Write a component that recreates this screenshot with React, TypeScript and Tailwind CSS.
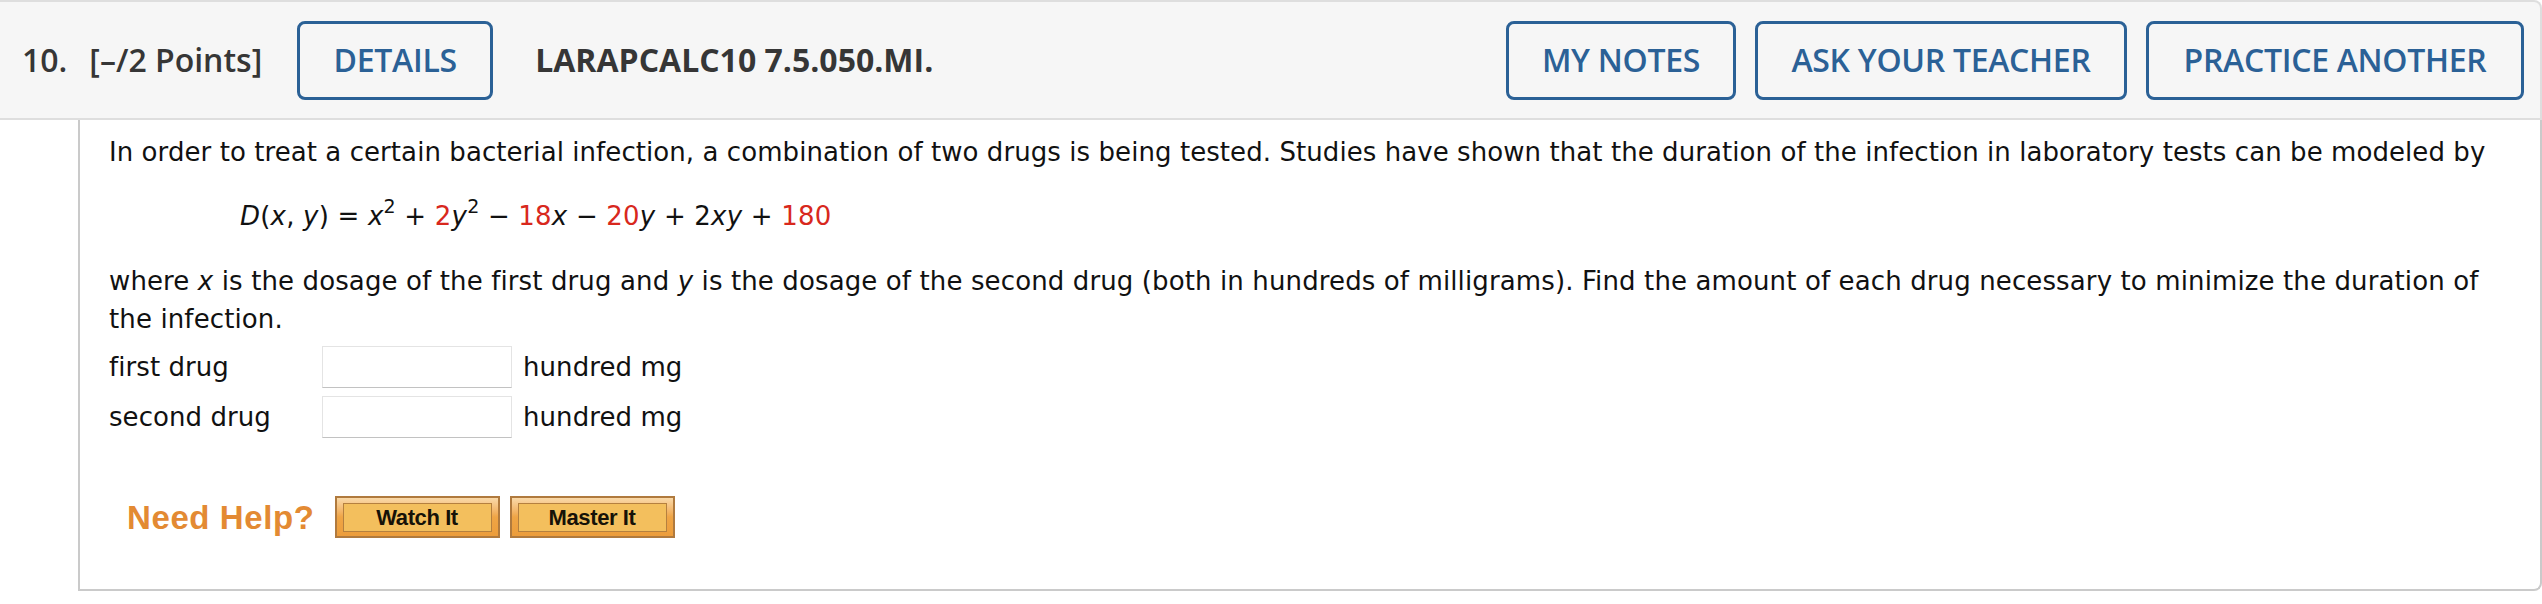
import React from 'react'

const blueBtn =
  'h-[79px] flex items-center justify-center whitespace-nowrap border-[3px] border-[#2b6196] rounded-[8px] text-[#2b6196] text-[32px] font-semibold tracking-[-0.3px]'

function HelpButton({ label }: { label: string }) {
  return (
    <div className="w-[165px] h-[42px] border-2 border-[#b07a3e] bg-gradient-to-b from-[#fad9a8] via-[#efa545] to-[#ec9d3c] px-[6px] pt-[5px] pb-[4px]">
      <div className="h-full border border-[#b5803f] bg-[#f3bf5d] flex items-center justify-center text-[22px] font-bold text-[#161208] tracking-[-0.4px] font-['Liberation_Sans',Arial,sans-serif]">
        {label}
      </div>
    </div>
  )
}

function Red({ children }: { children: React.ReactNode }) {
  return <span className="text-[#d8281d]">{children}</span>
}

function Sup({ children }: { children: React.ReactNode }) {
  return <sup className="text-[19px] leading-none relative -top-[12px]">{children}</sup>
}

export default function App() {
  return (
    <div className="w-[2542px] h-[604px] bg-white">
      {/* question header bar */}
      <div className="h-[120px] bg-[#f6f6f6] border-t-2 border-b-2 border-r-2 border-[#dedede] rounded-tr-[8px] flex items-center pl-[22px] pr-[16px] font-['Open_Sans',sans-serif] text-[#363636]">
        <span className="text-[32px] font-semibold">10.</span>
        <span className="text-[32px] font-semibold ml-[22px]">[–/2 Points]</span>
        <div className={blueBtn + ' ml-[35px] w-[196px]'}>DETAILS</div>
        <span className="text-[32px] font-bold ml-[42px]">LARAPCALC10 7.5.050.MI.</span>
        <div className="flex-1" />
        <div className="flex gap-[19px]">
          <div className={blueBtn + ' w-[230px]'}>MY NOTES</div>
          <div className={blueBtn + ' w-[372px]'}>ASK YOUR TEACHER</div>
          <div className={blueBtn + ' w-[378px]'}>PRACTICE ANOTHER</div>
        </div>
      </div>

      {/* question body */}
      <div className="ml-[78px] h-[471px] border-l-2 border-b-2 border-r-2 border-[#cacaca] rounded-br-[8px] pl-[29px] pt-[13px] font-['DejaVu_Sans',Verdana,sans-serif] text-[26px] leading-[38px] text-[#111] tracking-[0.07px]">
        <p className="whitespace-nowrap">
          In order to treat a certain bacterial infection, a combination of two drugs is being tested. Studies have shown that the duration of the infection in laboratory tests can be modeled by
        </p>
        <p className="ml-[131px] mt-[26px] whitespace-nowrap tracking-[0.2px]">
          <i>D</i>(<i>x</i>, <i>y</i>) = <i>x</i>
          <Sup>2</Sup> + <Red>2</Red>
          <i>y</i>
          <Sup>2</Sup> − <Red>18</Red>
          <i>x</i> − <Red>20</Red>
          <i>y</i> + 2<i>xy</i> + <Red>180</Red>
        </p>
        <p className="mt-[27px] whitespace-nowrap tracking-[0.12px]">
          where <i>x</i> is the dosage of the first drug and <i>y</i> is the dosage of the second drug (both in hundreds of milligrams). Find the amount of each drug necessary to minimize the duration of
          <br />
          the infection.
        </p>

        <div className="mt-[8px] flex flex-col gap-[8px]">
          {['first drug', 'second drug'].map((label) => (
            <div key={label} className="flex items-center h-[42px]">
              <span className="w-[213px]">{label}</span>
              <div className="w-[190px] h-[42px] bg-white border border-[#e4e4e4] border-b-[#c2c2c2]" />
              <span className="ml-[11px]">hundred mg</span>
            </div>
          ))}
        </div>

        <div className="mt-[58px] ml-[18px] flex items-center">
          <span className="text-[33px] font-bold text-[#e38a33] tracking-[0.6px] font-['Liberation_Sans',Arial,sans-serif] leading-none">
            Need Help?
          </span>
          <div className="ml-[20px] flex gap-[10px]">
            <HelpButton label="Watch It" />
            <HelpButton label="Master It" />
          </div>
        </div>
      </div>
    </div>
  )
}
